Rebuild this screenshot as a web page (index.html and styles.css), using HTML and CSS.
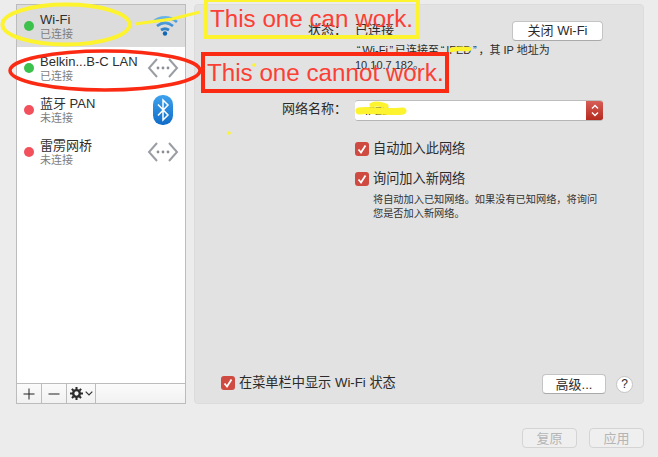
FILE: index.html
```
<!DOCTYPE html>
<html lang="zh">
<head>
<meta charset="utf-8">
<title>网络</title>
<link rel="stylesheet" href="styles.css">
</head>
<body>
<div class="window">
  <div class="main">
    <aside class="sidebar">
      <ul class="list">
        <li class="row selected">
          <span class="dot green"></span>
          <div class="names"><div class="name">Wi-Fi</div><div class="sub">已连接</div></div>
          <svg class="icon wifi" viewBox="0 0 26 20"><defs><linearGradient id="w" gradientUnits="userSpaceOnUse" x1="0" y1="0" x2="0" y2="20"><stop offset="0" stop-color="#6db7ec"/><stop offset="1" stop-color="#1266b6"/></linearGradient></defs><g fill="none" stroke="url(#w)" stroke-width="2.8"><path d="M1 6C8 0 18 0 25 6"/><path d="M5 10C10 6 16 6 21 10"/><path d="M9 14C11.5 12.4 14.5 12.4 17 14"/></g><circle cx="13" cy="17.5" r="2.2" fill="#1266b6"/></svg>
        </li>
        <li class="row">
          <span class="dot green"></span>
          <div class="names"><div class="name">Belkin...B-C LAN</div><div class="sub">已连接</div></div>
          <svg class="icon" viewBox="0 0 32 20"><g fill="none" stroke="#9a9da3" stroke-width="2"><path d="M10 1L2 10L10 19"/><path d="M22 1L30 10L22 19"/></g><g fill="#8c8f95"><circle cx="11" cy="10" r="1.4"/><circle cx="16" cy="10" r="1.4"/><circle cx="21" cy="10" r="1.4"/></g></svg>
        </li>
        <li class="row">
          <span class="dot red"></span>
          <div class="names"><div class="name">蓝牙 PAN</div><div class="sub">未连接</div></div>
          <svg class="icon bt" viewBox="0 0 20 30"><defs><linearGradient id="b" x1="0" y1="0" x2="0" y2="1"><stop offset="0" stop-color="#3ea2ee"/><stop offset="1" stop-color="#0f6cc8"/></linearGradient></defs><rect width="20" height="30" rx="9.5" fill="url(#b)"/><path d="M5 9.5L15 20L10 25V5L15 10L5 20.5" fill="none" stroke="#fff" stroke-width="1.5"/></svg>
        </li>
        <li class="row">
          <span class="dot red"></span>
          <div class="names"><div class="name">雷雳网桥</div><div class="sub">未连接</div></div>
          <svg class="icon" viewBox="0 0 32 20"><g fill="none" stroke="#9a9da3" stroke-width="2"><path d="M10 1L2 10L10 19"/><path d="M22 1L30 10L22 19"/></g><g fill="#8c8f95"><circle cx="11" cy="10" r="1.4"/><circle cx="16" cy="10" r="1.4"/><circle cx="21" cy="10" r="1.4"/></g></svg>
        </li>
      </ul>
      <div class="toolbar">
        <span class="tool">
          <svg viewBox="0 0 12 12" class="glyph"><path d="M6 0.5V11.5M0.5 6H11.5" stroke="#222" fill="none"/></svg>
        </span>
        <span class="tool">
          <svg viewBox="0 0 12 12" class="glyph"><path d="M0.5 6H11.5" stroke="#222" fill="none"/></svg>
        </span>
        <span class="tool gear">
          <svg viewBox="0 0 14 14" class="cog"><circle cx="7" cy="7" r="3.6" fill="none" stroke="#2a2a2a" stroke-width="2.6"/><g stroke="#2a2a2a" stroke-width="2.2"><path d="M7 0V14M0 7H14M2 2L12 12M12 2L2 12" stroke-dasharray="2.4 9.2"/></g></svg>
          <svg viewBox="0 0 8 5" class="chev"><path d="M0.7 0.7L4 4L7.3 0.7" fill="none" stroke="#333" stroke-width="1.2"/></svg>
        </span>
      </div>
    </aside>
    <section class="panel">
      <div class="status-row">
        <div class="label">状态：</div>
        <div class="value">已连接</div>
        <button class="btn off">关闭 Wi-Fi</button>
      </div>
      <p class="note"><span class="q">“</span>Wi-Fi<span class="q">”</span>已连接至<span class="q">“</span>IFED<span class="q">”</span>，其 IP 地址为<br>10.10.7.182。</p>
      <div class="net-row">
        <div class="label">网络名称：</div>
        <div class="select">
          <span class="select-text">IFED</span>
          <span class="stepper"><svg viewBox="0 0 10 15"><path d="M2 5.5L5 2.5L8 5.5M2 9.5L5 12.5L8 9.5" fill="none" stroke="#fff" stroke-width="1.4"/></svg></span>
        </div>
      </div>
      <div class="check first"><span class="box"><svg viewBox="0 0 14 14"><path d="M3.5 7.5L6 10.5L10.5 3.5" fill="none" stroke="#fff" stroke-width="1.8"/></svg></span>自动加入此网络</div>
      <div class="check second"><span class="box"><svg viewBox="0 0 14 14"><path d="M3.5 7.5L6 10.5L10.5 3.5" fill="none" stroke="#fff" stroke-width="1.8"/></svg></span>询问加入新网络</div>
      <p class="hint">将自动加入已知网络。如果没有已知网络，将询问<br>您是否加入新网络。</p>
      <div class="panel-foot">
        <div class="check menu"><span class="box"><svg viewBox="0 0 14 14"><path d="M3.5 7.5L6 10.5L10.5 3.5" fill="none" stroke="#fff" stroke-width="1.8"/></svg></span>在菜单栏中显示 Wi-Fi 状态</div>
        <button class="btn adv">高级...</button>
        <span class="help">?</span>
      </div>
    </section>
  </div>
  <div class="actions">
    <button class="btn off-state">复原</button>
    <button class="btn off-state">应用</button>
  </div>
</div>
<div class="note-yes">This one can work.</div>
<div class="note-no">This one cannot work.</div>
<svg class="marks" viewBox="0 0 658 457">
  <ellipse cx="66" cy="24.5" rx="63.5" ry="20" fill="none" stroke="#fdf32f" stroke-width="4"/>
  <ellipse cx="105" cy="70.5" rx="95" ry="19.5" fill="none" stroke="#fb2b13" stroke-width="3.5"/>
  <path d="M135 24L172 19L200 12" fill="none" stroke="#fdf32f" stroke-width="3"/>
  <path d="M359 111C368 109 392 113 403 111" fill="none" stroke="#fdf32f" stroke-width="7" stroke-linecap="round"/>
  <path d="M372 105C376 103 381 104 386 106" fill="none" stroke="#fdf32f" stroke-width="5" stroke-linecap="round"/>
  <path d="M451 50C458 48 464 49 469 49" fill="none" stroke="#fdf32f" stroke-width="4.5" stroke-linecap="round"/>
  <circle cx="254" cy="65" r="1.8" fill="#fdf32f"/>
  <circle cx="229" cy="133" r="1.8" fill="#fdf32f"/>
</svg>
</body>
</html>
```
FILE: styles.css
```
* { box-sizing: border-box; }
html, body { margin: 0; padding: 0; }
body {
  width: 658px;
  height: 457px;
  overflow: hidden;
  position: relative;
  background: #ececec;
  color: #2b2b2b;
  font-family: "Liberation Sans", "Noto Sans CJK SC", sans-serif;
  font-size: 12px;
}
.window { padding: 4px 14px 0 16px; }
.main { display: flex; gap: 8px; height: 400px; }

.sidebar {
  width: 170px;
  display: flex;
  flex-direction: column;
  background: #fff;
  border: 1px solid #bcbcbc;
}
.list { list-style: none; margin: 0; padding: 0; flex: 1; }
.row {
  height: 42px;
  display: flex;
  align-items: center;
  padding: 0 6px 0 7px;
}
.row.selected { background: #dcdcdc; }
.dot { width: 10px; height: 10px; border-radius: 50%; flex: none; }
.dot.green { background: #3cc14c; }
.dot.red { background: #f2505a; }
.names { margin-left: 6px; flex: 1; min-width: 0; }
.name { font-size: 13px; line-height: 15px; color: #2e2e2e; white-space: nowrap; }
.sub { font-size: 11px; line-height: 14px; color: #7d7d7d; }
.icon { width: 32px; height: 20px; flex: none; }
.icon.wifi { width: 26px; height: 20px; margin-right: 1px; }
.icon.bt { width: 20px; height: 30px; margin-right: 6px; }

.toolbar {
  height: 20px;
  display: flex;
  border-top: 1px solid #bcbcbc;
  background: linear-gradient(#fbfbfb, #f1f1f1);
}
.tool {
  width: 25px;
  border-right: 1px solid #bcbcbc;
  display: flex;
  align-items: center;
  justify-content: center;
}
.tool.gear { width: 29px; gap: 2px; }
.glyph { width: 12px; height: 12px; }
.cog { width: 13px; height: 13px; }
.chev { width: 8px; height: 5px; }

.panel {
  width: 450px;
  background: #e2e2e2;
  border: 1px solid #dcdcdc;
  border-radius: 4px;
  padding: 15px 40px 0 0;
  display: flex;
  flex-direction: column;
  color: #2b2b2b;
}
.status-row { display: flex; align-items: center; height: 21px; }
.label { width: 152px; text-align: right; font-size: 13px; line-height: 16px; }
.status-row .label, .status-row .value { padding-bottom: 1px; }
.net-row .label { padding-bottom: 3px; }
.value { margin-left: 8px; flex: 1; font-size: 13px; line-height: 16px; }
.note {
  margin: 2px 0 0 160px;
  font-size: 11px;
  line-height: 15px;
}
.q { padding: 0 1.75px; }
.net-row { display: flex; align-items: center; margin-top: 27px; }
.select {
  margin-left: 8px;
  flex: 1;
  height: 21px;
  background: #fff;
  border-radius: 3px;
  border-top: 1px solid #bdbdbd;
  border-bottom: 1px solid #b5b5b5;
  display: flex;
  justify-content: space-between;
  align-items: center;
  overflow: hidden;
}
.select-text { padding-left: 10px; font-size: 11px; }
.stepper {
  width: 17px;
  height: 21px;
  background: linear-gradient(#d9605a, #b3281c);
  display: flex;
  align-items: center;
  justify-content: center;
}
.stepper svg { width: 10px; height: 15px; }

.check { display: flex; align-items: center; gap: 4px; font-size: 13.2px; line-height: 16px; }
.check.first { margin: 20px 0 0 160px; }
.check.second { margin: 14px 0 0 160px; }
.box {
  width: 14px;
  height: 14px;
  border-radius: 3px;
  background: #cf4a40;
  flex: none;
  display: block;
}
.box svg { display: block; width: 14px; height: 14px; }
.hint {
  margin: 6px 0 0 178px;
  font-size: 10.2px;
  line-height: 14px;
  color: #333;
}
.panel-foot {
  margin-top: auto;
  height: 29px;
  padding: 0 0 0 26px;
  margin-right: -30px;
  display: flex;
  align-items: flex-start;
}
.check.menu { flex: 1; height: 16px; margin-top: 1px; }
.btn {
  font-family: inherit;
  background: #fff;
  color: #2b2b2b;
  border: 1px solid #c4c4c4;
  border-bottom-color: #aaa;
  border-radius: 4px;
  padding: 0;
  font-size: 13px;
  line-height: 17px;
  text-align: center;
}
.btn.off { width: 91px; height: 20px; }
.btn.adv { width: 64px; height: 20px; }
.help {
  width: 17px;
  height: 17px;
  margin: 2px 0 0 10px;
  border-radius: 50%;
  background: #fff;
  border: 1px solid #c4c4c4;
  font-size: 12px;
  line-height: 15px;
  text-align: center;
}
.actions { display: flex; justify-content: flex-end; gap: 12px; margin-top: 24px; }
.btn.off-state {
  width: 55px;
  height: 20px;
  background: #efefef;
  border-color: #d4d4d4;
  color: #b5b5b5;
}

.note-yes, .note-no {
  position: absolute;
  color: #fb3f35;
  font-size: 24.2px;
  white-space: nowrap;
}
.note-yes { left: 204px; top: -2px; width: 216px; height: 41px; border: 4px solid #fdf32f; padding: 0 0 0 2px; line-height: 34px; }
.note-no { left: 201px; top: 52px; width: 248px; height: 41px; border: 4px solid #fb2b13; padding: 0 0 0 2px; line-height: 34px; }
.marks { position: absolute; left: 0; top: 0; width: 658px; height: 457px; pointer-events: none; }
```
